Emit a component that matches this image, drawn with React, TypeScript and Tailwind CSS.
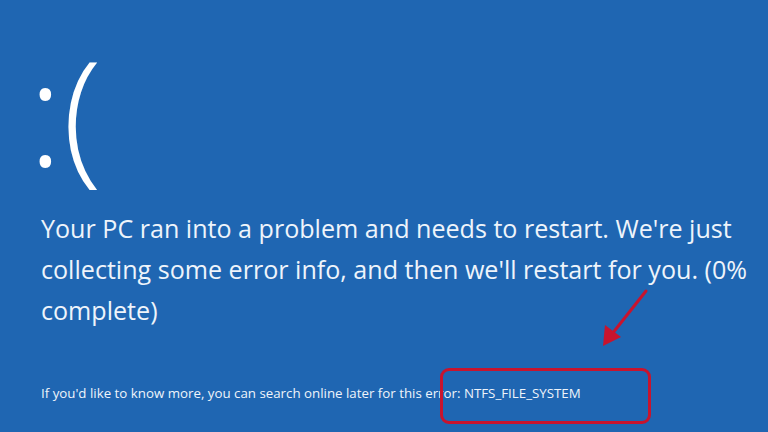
import React from "react"

export default function App() {
  return (
    <div className="relative w-[768px] h-[432px] overflow-hidden bg-[#1f66b2] text-[#eef4fb]" style={{ fontFamily: '"Open Sans", "Noto Sans", sans-serif' }}>
      <div className="flex flex-col pl-[41px] pt-[26px]">
        <div className="-ml-[13px] text-[145px] leading-[170px] font-light tracking-[0px] text-white">:(</div>
        <p className="mt-[12px] w-[724px] text-[25.1px] leading-[41px]">
          Your PC ran into a problem and needs to restart. We're just collecting some error info, and then we'll restart for you. (0% complete)
        </p>
        <p className="mt-[54px] text-[13.3px] leading-[16px]">
          If you'd like to know more, you can search online later for this error: NTFS_FILE_SYSTEM
        </p>
      </div>

      {/* annotation */}
      <div className="absolute left-[440px] top-[368px] w-[211px] h-[56px] rounded-[9px] border-[3px] border-[#c8142e]" />
      <svg className="absolute left-0 top-0" width="768" height="432">
        <line x1="646" y1="291" x2="612" y2="334" stroke="#c8142e" strokeWidth="3" strokeLinecap="round" />
        <polygon points="603,346 605,325 621,337" fill="#c8142e" />
      </svg>
    </div>
  )
}
